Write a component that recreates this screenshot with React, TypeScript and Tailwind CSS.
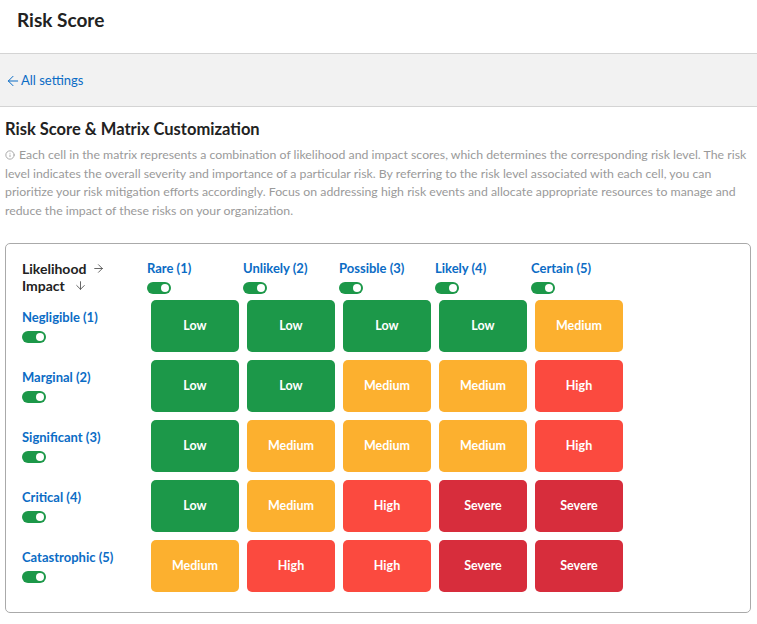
import { ArrowLeft, ArrowRight, ArrowDown, Info } from 'lucide-react'

type Level = 'Low' | 'Medium' | 'High' | 'Severe'

const likelihoods = ['Rare (1)', 'Unlikely (2)', 'Possible (3)', 'Likely (4)', 'Certain (5)']

const impacts: { label: string; cells: Level[] }[] = [
  { label: 'Negligible (1)', cells: ['Low', 'Low', 'Low', 'Low', 'Medium'] },
  { label: 'Marginal (2)', cells: ['Low', 'Low', 'Medium', 'Medium', 'High'] },
  { label: 'Significant (3)', cells: ['Low', 'Medium', 'Medium', 'Medium', 'High'] },
  { label: 'Critical (4)', cells: ['Low', 'Medium', 'High', 'Severe', 'Severe'] },
  { label: 'Catastrophic (5)', cells: ['Medium', 'High', 'High', 'Severe', 'Severe'] },
]

const levelColors: Record<Level, string> = {
  Low: 'bg-[#1c9849]',
  Medium: 'bg-[#fcb02f]',
  High: 'bg-[#fb4a3f]',
  Severe: 'bg-[#d72d3c]',
}

function Toggle() {
  return (
    <div className="w-6 h-3 rounded-full bg-[#1c9849] flex items-center justify-end pr-[2px]">
      <div className="w-2 h-2 rounded-full bg-white" />
    </div>
  )
}

export default function App() {
  return (
    <div className="bg-white text-[#222] min-h-screen" style={{ fontFamily: 'Lato, "Open Sans", sans-serif' }}>
      {/* Header */}
      <div className="h-[54px] flex items-start pt-[8px] px-[17px] border-b border-[#d4d4d4]">
        <h1 className="text-[19px] leading-[24px] font-bold text-[#222]">Risk Score</h1>
      </div>

      {/* Back bar */}
      <div className="h-[53px] bg-[#f2f2f2] border-b border-[#d4d4d4] flex items-center pt-[2px] px-[5px]">
        <a className="flex items-center text-[13px] text-[#0b6cc5] cursor-pointer">
          <ArrowLeft size={16} strokeWidth={1.5} />
          <span>All settings</span>
        </a>
      </div>

      <div className="px-[5px] pr-[6px]">
        <h2 className="text-[16.5px] font-bold mt-[11px] leading-[22px]">Risk Score &amp; Matrix Customization</h2>
        <p className="mt-[6px] text-[12.3px] leading-[18.5px] text-[#9a9a9a]">
          <Info size={10} className="inline-block align-[-1px] mr-1" />
          Each cell in the matrix represents a combination of likelihood and impact scores, which determines the corresponding risk level. The risk level indicates the overall severity and importance of a particular risk. By referring to the risk level associated with each cell, you can prioritize your risk mitigation efforts accordingly. Focus on addressing high risk events and allocate appropriate resources to manage and reduce the impact of these risks on your organization.
        </p>

        {/* Matrix */}
        <div className="mt-[23px] border border-[#aaa] rounded-[5px] pl-4 pt-[16px] pb-[20px]">
          <div className="grid grid-cols-[125px_repeat(5,96px)] gap-y-2">
            <div className="h-[32px] text-[14px] font-bold leading-[17px] text-[#222]">
              <div className="flex items-center gap-[6px]">
                Likelihood <ArrowRight size={13} strokeWidth={1.5} className="text-[#444]" />
              </div>
              <div className="flex items-center gap-[9px]">
                Impact <ArrowDown size={13} strokeWidth={1.5} className="text-[#444]" />
              </div>
            </div>
            {likelihoods.map(l => (
              <div key={l} className="h-[32px] flex flex-col">
                <span className="text-[13px] font-bold leading-[17px] text-[#0b6cc5]">{l}</span>
                <div className="mt-[5px]">
                  <Toggle />
                </div>
              </div>
            ))}

            {impacts.map(row => (
              <div key={row.label} className="contents">
                <div className="pt-[9px]">
                  <div className="text-[13px] font-bold leading-[17px] text-[#0b6cc5]">{row.label}</div>
                  <div className="mt-[5px]">
                    <Toggle />
                  </div>
                </div>
                {row.cells.map((c, i) => (
                  <div key={i} className="px-1">
                    <div
                      className={`h-[52px] rounded-[5px] flex items-center justify-center text-white text-[12.5px] font-bold ${levelColors[c]}`}
                    >
                      {c}
                    </div>
                  </div>
                ))}
              </div>
            ))}
          </div>
        </div>
      </div>
    </div>
  )
}
